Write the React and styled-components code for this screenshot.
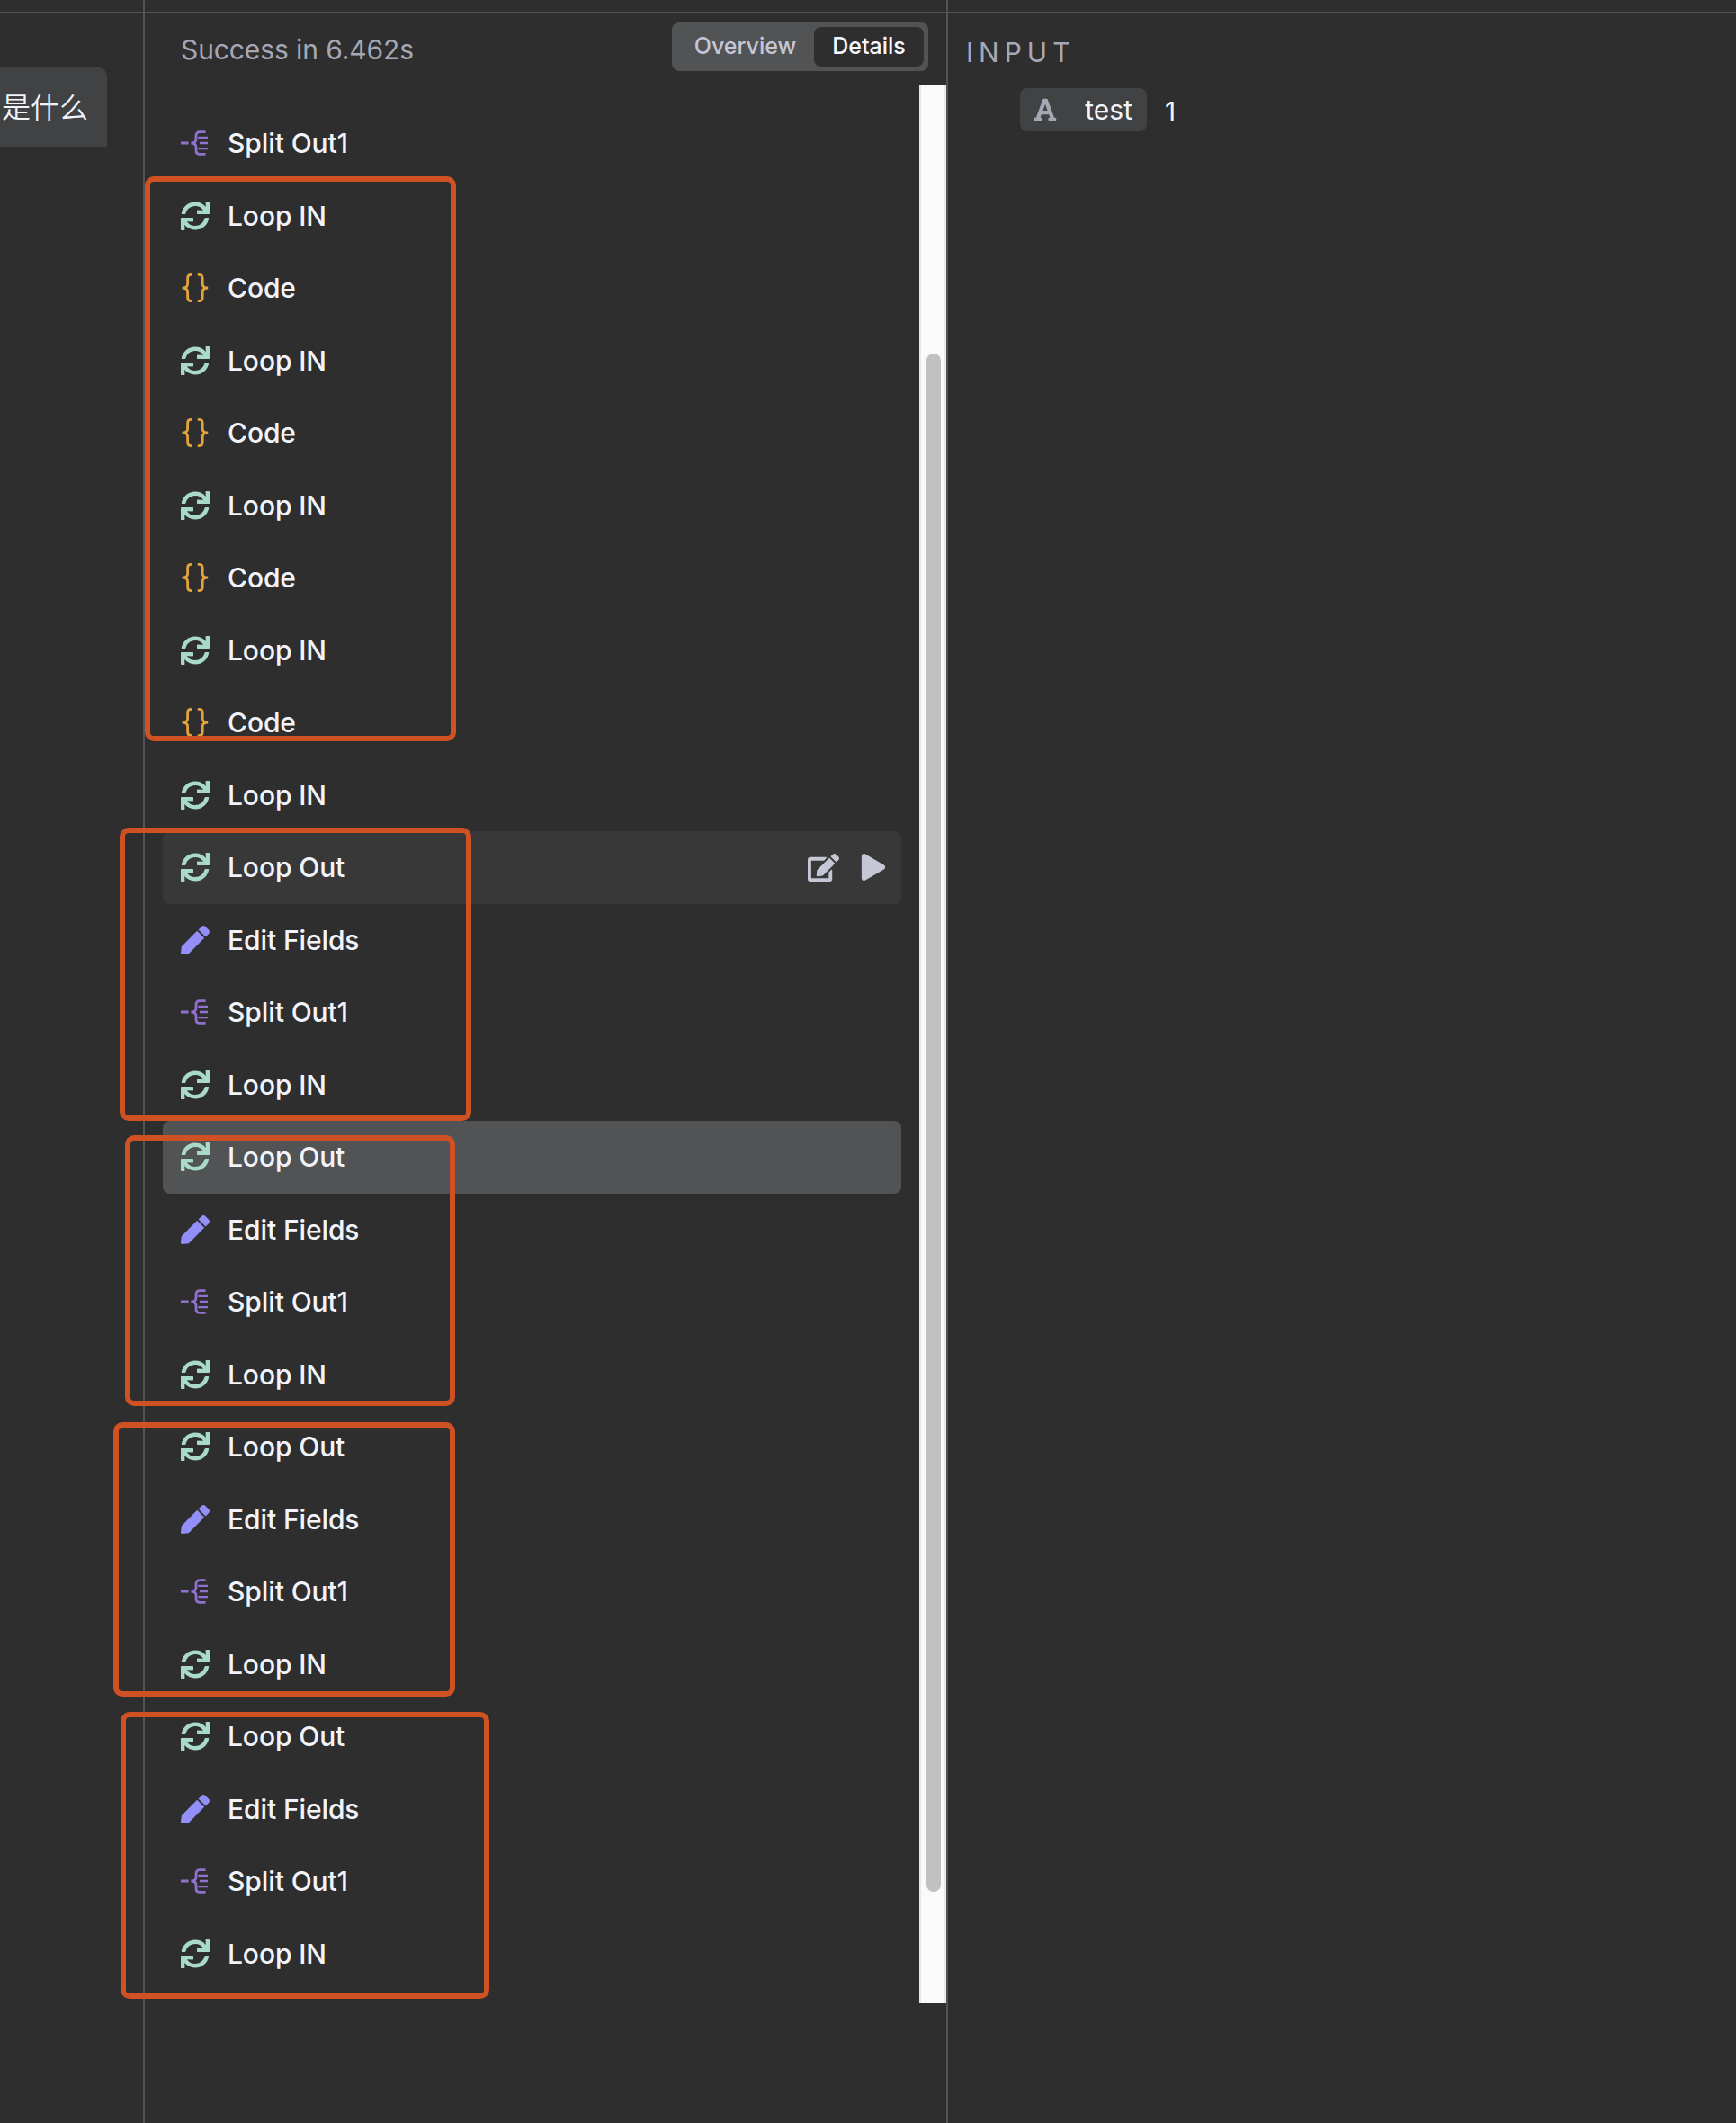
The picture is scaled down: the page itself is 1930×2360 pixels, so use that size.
import styled, { createGlobalStyle } from 'styled-components'
import { FaSync, FaPen, FaEdit, FaPlay, FaFont } from 'react-icons/fa'

const GlobalStyle = createGlobalStyle`
    *{
        box-sizing: border-box;
    }

    body{
        margin: 0;
        background: #2e2e2e;
        color: #f3f3fa;
        font-family: Inter, "Noto Sans CJK SC", sans-serif;
    }
`;

const Page = styled.div`
    position: relative;
    width: 1930px;
    height: 2360px;
    overflow: hidden;
    display: grid;
    grid-template-columns: 161px 893px 1fr;
    grid-template-rows: 15px 1fr;
`;

const Strip = styled.div`
    border-bottom: 2px solid #525354;
    border-right: ${props => props.$last ? 'none' : '2px solid #525354'};
`;

const Chat = styled.aside`
    border-right: 2px solid #525354;
    padding-top: 60px;
    display: flex;
    flex-direction: column;
    align-items: flex-start;
`;

const Message = styled.div`
    width: 119px;
    height: 88px;
    padding: 0 21px 5px 0;
    display: flex;
    align-items: center;
    justify-content: flex-end;
    background: #414244;
    border-radius: 0 10px 0 0;
    font-size: 32px;
    font-weight: 350;
    white-space: nowrap;
`;

const Logs = styled.section`
    border-right: 2px solid #525354;
    display: flex;
    flex-direction: column;
`;

const LogsHeader = styled.header`
    height: 80px;
    padding: 10px 20px 0 40px;
    display: flex;
    justify-content: space-between;
    align-items: flex-start;
`;

const Status = styled.span`
    margin-top: 8px;
    font-size: 30px;
    line-height: 44px;
    letter-spacing: -0.1px;
    color: #a5a7b5;
    white-space: nowrap;
`;

const Tabs = styled.div`
    width: 285px;
    height: 54px;
    padding: 5px;
    display: flex;
    background: #525354;
    border-radius: 8px;
`;

const Tab = styled.button`
    width: ${props => props.$active ? '122px' : '153px'};
    height: 44px;
    padding: 0 0 2px;
    border: none;
    border-radius: 8px;
    background: ${props => props.$active ? '#2e2e2e' : 'transparent'};
    color: ${props => props.$active ? '#f8f8ff' : '#c6c7d6'};
    font-family: inherit;
    font-size: 25px;
    font-weight: 500;
`;

const LogsBody = styled.div`
    height: 2132px;
    display: flex;
    justify-content: space-between;
`;

const List = styled.ul`
    width: 821px;
    margin: 0 0 0 20px;
    padding: 24px 0 0;
    list-style: none;
`;

const Row = styled.li`
    height: 80.5px;
    padding: 0 16px 0 20px;
    display: flex;
    align-items: center;
    gap: 20px;
    border-radius: 8px;
    background: ${props => props.$state === 'selected' ? '#525354' : props.$state === 'hover' ? '#383838' : 'transparent'};
    font-size: 30px;
    font-weight: 500;
    letter-spacing: -0.1px;

    > svg{
        flex: none;
        width: 32px;
        height: 32px;
    }
`;

const Actions = styled.span`
    margin-left: auto;
    display: flex;
    align-items: center;
    gap: 23px;
    color: #c6c7d6;
`;

const Track = styled.div`
    width: 30px;
    padding: 298px 0 0 6px;
    background: #fafafa;
    border: solid #e8e8e8;
    border-width: 0 2px;
`;

const Thumb = styled.div`
    width: 16px;
    height: 1710px;
    border-radius: 8px;
    background: #c1c1c1;
`;

const Input = styled.section`
    padding: 20px 0 0 20px;
`;

const Title = styled.h2`
    margin: 0;
    font-size: 30px;
    font-weight: 400;
    line-height: 46px;
    letter-spacing: 6px;
    color: #a5a7b5;
`;

const Field = styled.div`
    margin: 17px 0 0 60px;
    display: flex;
    align-items: center;
    gap: 20px;
    font-size: 30px;
`;

const Chip = styled.span`
    width: 141px;
    height: 48px;
    padding: 0 16px 0 14px;
    display: flex;
    align-items: center;
    justify-content: space-between;
    background: #414244;
    border-radius: 8px;
`;

const Value = styled.span`
    padding-top: 4px;
`;

const Mark = styled.div`
    position: absolute;
    top: ${props => props.$top}px;
    left: ${props => props.$left}px;
    width: ${props => props.$width}px;
    height: ${props => props.$height}px;
    border: 6px solid #cf5124;
    border-radius: 10px;
`;

function SplitIcon() {
    return (
      <svg viewBox="0 0 32 32" fill="none" stroke="#9171cf" strokeWidth="2.8">
          <path d="M0 16h8.6M27.6 3.6h-6.4c-2.8 0-4.2 1.4-4.2 4.2v3.6c0 2.8-1.8 4.6-5.6 4.6 3.8 0 5.6 1.8 5.6 4.6v3.6c0 2.8 1.4 4.2 4.2 4.2h6.4"/>
          <path strokeWidth="2.4" d="M19.3 9.9H30M21 16h9M19.3 22.1H30"/>
      </svg>
    );
}

function CodeIcon() {
    return (
      <svg viewBox="0 0 32 32" fill="none" stroke="#e2a33c" strokeWidth="2.8">
          <path d="M13 1.4h-1.6c-2.6 0-3.8 1.2-3.8 3.8v6.2c0 2.8-2 4.6-6 4.6 4 0 6 1.8 6 4.6v6.2c0 2.6 1.2 3.8 3.8 3.8H13"/>
          <path d="M18.8 1.4h1.6c2.6 0 3.8 1.2 3.8 3.8v6.2c0 2.8 2 4.6 6 4.6-4 0-6 1.8-6 4.6v6.2c0 2.6-1.2 3.8-3.8 3.8h-1.6"/>
      </svg>
    );
}

const icons = {
    'Split Out1': <SplitIcon/>,
    'Loop IN': <FaSync color="#a9dac9"/>,
    'Loop Out': <FaSync color="#a9dac9"/>,
    'Code': <CodeIcon/>,
    'Edit Fields': <FaPen color="#938ff8"/>,
}

const batch = ['Loop Out', 'Edit Fields', 'Split Out1', 'Loop IN']

const nodes = [
    'Split Out1',
    'Loop IN', 'Code',
    'Loop IN', 'Code',
    'Loop IN', 'Code',
    'Loop IN', 'Code',
    'Loop IN',
    ...batch, ...batch, ...batch, ...batch,
]

const hovered = 10
const selected = 14

const marks = [
    { top: 196, left: 161, width: 346, height: 628 },
    { top: 920, left: 133, width: 391, height: 326 },
    { top: 1262, left: 139, width: 367, height: 301 },
    { top: 1581, left: 126, width: 380, height: 305 },
    { top: 1903, left: 134, width: 410, height: 319 },
]

function App() {
    return (
      <>
          <GlobalStyle/>
          <Page>
              <Strip/>
              <Strip/>
              <Strip $last/>

              <Chat>
                  <Message>是什么</Message>
              </Chat>

              <Logs>
                  <LogsHeader>
                      <Status>Success in 6.462s</Status>
                      <Tabs>
                          <Tab>Overview</Tab>
                          <Tab $active>Details</Tab>
                      </Tabs>
                  </LogsHeader>
                  <LogsBody>
                      <List>
                          {nodes.map((name, i) => (
                              <Row key={i} $state={i === selected ? 'selected' : i === hovered ? 'hover' : ''}>
                                  {icons[name]}
                                  <span>{name}</span>
                                  {i === hovered && (
                                      <Actions>
                                          <FaEdit size={35}/>
                                          <FaPlay size={30}/>
                                      </Actions>
                                  )}
                              </Row>
                          ))}
                      </List>
                      <Track>
                          <Thumb/>
                      </Track>
                  </LogsBody>
              </Logs>

              <Input>
                  <Title>INPUT</Title>
                  <Field>
                      <Chip>
                          <FaFont size={28} color="#a5a7b5"/>
                          <span>test</span>
                      </Chip>
                      <Value>1</Value>
                  </Field>
              </Input>

              {marks.map(m => (
                  <Mark key={m.top} $top={m.top} $left={m.left} $width={m.width} $height={m.height}/>
              ))}
          </Page>
      </>
    );
}

export default App;
